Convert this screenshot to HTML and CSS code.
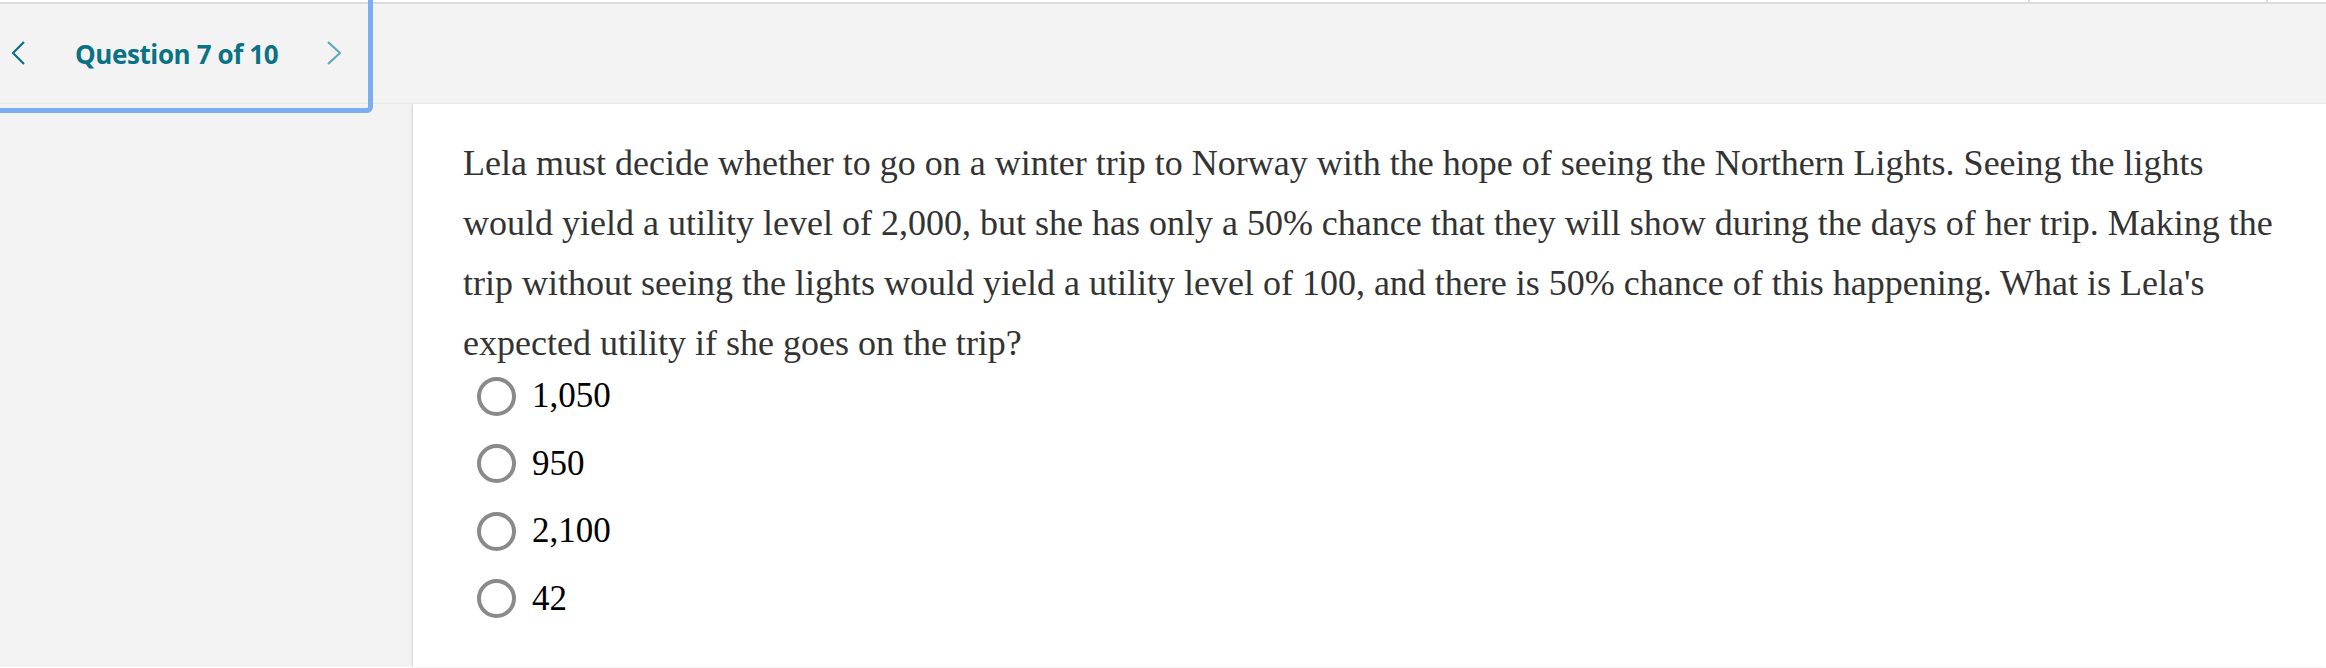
FILE: index.html
```html
<!DOCTYPE html>
<html lang="en">
<head>
<meta charset="utf-8">
<title>Question 7 of 10</title>
<link rel="stylesheet" href="styles.css">
</head>
<body>
<div class="tabstrip">
  <span class="tab-sep sep-a"></span>
  <span class="tab-sep sep-b"></span>
</div>
<header class="header">
  <nav class="qnav">
    <button class="chev chev-prev" aria-label="Previous question">
      <svg width="15" height="24" viewBox="0 0 15 24"><polyline points="13,1 2,12 13,23" fill="none" stroke="#0a7286" stroke-width="2.2"/></svg>
    </button>
    <span class="qnav-title">Question 7 of 10</span>
    <button class="chev chev-next" aria-label="Next question">
      <svg width="15" height="24" viewBox="0 0 15 24"><polyline points="2,1 14,12 2,23" fill="none" stroke="#5fa9b6" stroke-width="2.2"/></svg>
    </button>
  </nav>
</header>
<main class="main">
  <aside class="sidebar"></aside>
  <section class="content">
    <p class="question">Lela must decide whether to go on a winter trip to Norway with the hope of seeing the Northern Lights. Seeing the lights would yield a utility level of 2,000, but she has only a 50% chance that they will show during the days of her trip. Making the trip without seeing the lights would yield a utility level of 100, and there is 50% chance of this happening. What is Lela's expected utility if she goes on the trip?</p>
    <ul class="options">
      <li class="option"><span class="radio"></span><span class="opt-text">1,050</span></li>
      <li class="option"><span class="radio"></span><span class="opt-text">950</span></li>
      <li class="option"><span class="radio"></span><span class="opt-text">2,100</span></li>
      <li class="option"><span class="radio"></span><span class="opt-text">42</span></li>
    </ul>
  </section>
</main>
</body>
</html>
```
FILE: styles.css
```css
*, *::before, *::after { box-sizing: border-box; }
html, body { margin: 0; padding: 0; background: #ffffff; }
body { width: 2326px; height: 668px; overflow: hidden; font-family: "Liberation Serif", "Times New Roman", serif; }

.tabstrip {
  position: relative;
  height: 2px;
  background: #ffffff;
}
.tab-sep {
  position: absolute;
  top: 0;
  width: 2px;
  height: 2px;
  background: #dcdcdc;
}
.sep-a { left: 2028px; }
.sep-b { left: 2266px; }

.header {
  height: 102px;
  background: #f3f3f3;
  border-top: 2px solid #dcdcdc;
  border-bottom: 1px solid #e6e6e6;
  position: relative;
}

.qnav {
  position: relative;
  display: flex;
  align-items: center;
  width: 373px;
  height: 100px;
  padding-left: 11px;
}
.qnav::after {
  content: "";
  position: absolute;
  left: -10px;
  top: -14px;
  width: 383px;
  height: 123px;
  border: 5px solid #7aaef0;
  border-radius: 6px;
  pointer-events: none;
}
.chev {
  display: flex;
  align-items: center;
  justify-content: center;
  width: 15px;
  height: 24px;
  padding: 0;
  margin: 0;
  border: 0;
  background: transparent;
}
.chev-prev { margin-top: -2px; }
.chev-next { margin-top: -2px; margin-left: 48px; }
.qnav-title {
  margin-left: 49px;
  font-family: "Open Sans", "Noto Sans", sans-serif;
  font-weight: 700;
  font-size: 26px;
  color: #0a7286;
  letter-spacing: -0.4px;
  white-space: nowrap;
}

.main {
  display: flex;
  height: 563px;
}
.sidebar {
  width: 413px;
  flex: none;
  background: #f3f3f3;
}
.content {
  flex: 1;
  background: #ffffff;
  box-shadow: -1px 0 2px rgba(0, 0, 0, 0.12);
  padding: 29px 50px 0 50px;
}
.question {
  margin: 0;
  font-size: 36px;
  line-height: 60px;
  color: #333333;
}
.options {
  list-style: none;
  margin: 3px 0 0 0;
  padding: 0 0 0 14px;
  display: flex;
  flex-direction: column;
  gap: 27.5px;
}
.option {
  display: flex;
  align-items: center;
  height: 40px;
}
.radio {
  width: 39px;
  height: 39px;
  flex: none;
  border: 4px solid #8a8a8a;
  border-radius: 50%;
  background: #ffffff;
}
.opt-text {
  margin-left: 16px;
  font-size: 35px;
  line-height: 40px;
  color: #000000;
}
```
